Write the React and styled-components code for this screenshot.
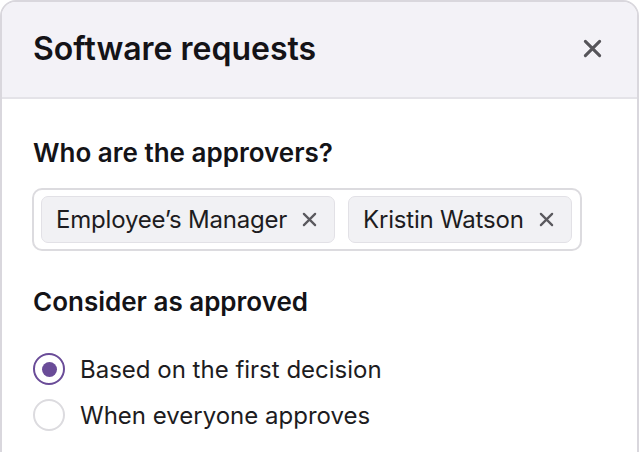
import React from "react";
import styled, { createGlobalStyle } from "styled-components";

const Global = createGlobalStyle`
  html, body { margin: 0; padding: 0; background: #ffffff; overflow: hidden; }
  body { font-family: Inter, "Noto Sans", sans-serif; color: #18171c; -webkit-font-smoothing: antialiased; }
`;

const Card = styled.div`
  box-sizing: border-box;
  width: 639px;
  height: 470px;
  border: 2px solid #d9d7dd;
  border-radius: 16px;
  overflow: hidden;
  background: #ffffff;
`;

const Header = styled.div`
  box-sizing: border-box;
  height: 97px;
  display: flex;
  align-items: center;
  justify-content: space-between;
  padding: 0 35px 2px 31px;
  background: #f3f2f7;
  border-bottom: 2px solid #e4e3e8;
`;

const Title = styled.h1`
  margin: 0;
  font-size: 32px;
  line-height: 40px;
  font-weight: 600;
  color: #141317;
`;

const CloseButton = styled.button`
  border: 0;
  background: none;
  padding: 0;
  width: 20px;
  height: 20px;
  display: flex;
  align-items: center;
  justify-content: center;
  color: #56555a;
  cursor: pointer;
`;

const Body = styled.div`
  padding: 40px 31px 0 30px;
  display: flex;
  flex-direction: column;
`;

const SectionTitle = styled.h2`
  margin: 0 0 0 1px;
  font-size: 26px;
  line-height: 28px;
  font-weight: 600;
  color: #141317;
`;

const TagField = styled.div`
  box-sizing: border-box;
  margin-top: 21px;
  width: 550px;
  display: flex;
  gap: 13px;
  padding: 6px 7px;
  border: 2px solid #dcdbdf;
  border-radius: 10px;
`;

const Tag = styled.span`
  box-sizing: border-box;
  flex: none;
  white-space: nowrap;
  height: 47px;
  display: inline-flex;
  align-items: center;
  gap: 15px;
  padding: 0 17px 0 14px;
  background: #f1f1f4;
  border: 1px solid #e2e1e6;
  border-radius: 7px;
  font-size: 24px;
  letter-spacing: -0.2px;
  color: #1d1c21;
`;

const TagRemove = styled.span`
  display: inline-flex;
  color: #5a595e;
`;

const ConsiderTitle = styled(SectionTitle)`
  margin-top: 37px;
`;

const RadioList = styled.div`
  margin: 38px 0 0 1px;
  display: flex;
  flex-direction: column;
  gap: 16px;
`;

const RadioRow = styled.label`
  display: flex;
  align-items: center;
  gap: 15px;
  font-size: 24px;
  color: #1d1c21;
  height: 30px;
`;

const RadioCircle = styled.span`
  box-sizing: border-box;
  flex: none;
  width: 32px;
  height: 32px;
  border-radius: 50%;
  border: 2px solid ${(p) => (p.$checked ? "#6a4c98" : "#dcdbdf")};
  display: flex;
  align-items: center;
  justify-content: center;
  background: #fff;
  &::after {
    content: "";
    width: 15px;
    height: 15px;
    border-radius: 50%;
    background: ${(p) => (p.$checked ? "#6a4c98" : "transparent")};
  }
`;

const XIcon = ({ size = 14, stroke = 2.6 }) => (
  <svg width={size} height={size} viewBox="0 0 16 16" fill="none">
    <path d="M2 2 L14 14 M14 2 L2 14" stroke="currentColor" strokeWidth={stroke} strokeLinecap="round" />
  </svg>
);

export default function App() {
  return (
    <>
      <Global />
      <Card>
        <Header>
          <Title>Software requests</Title>
          <CloseButton aria-label="Close">
            <XIcon size={19} stroke={2.6} />
          </CloseButton>
        </Header>
        <Body>
          <SectionTitle>Who are the approvers?</SectionTitle>
          <TagField>
            <Tag>
              Employee’s Manager
              <TagRemove><XIcon size={15} stroke={2.4} /></TagRemove>
            </Tag>
            <Tag>
              Kristin Watson
              <TagRemove><XIcon size={15} stroke={2.4} /></TagRemove>
            </Tag>
          </TagField>
          <ConsiderTitle>Consider as approved</ConsiderTitle>
          <RadioList>
            <RadioRow>
              <RadioCircle $checked />
              Based on the first decision
            </RadioRow>
            <RadioRow>
              <RadioCircle />
              When everyone approves
            </RadioRow>
          </RadioList>
        </Body>
      </Card>
    </>
  );
}
